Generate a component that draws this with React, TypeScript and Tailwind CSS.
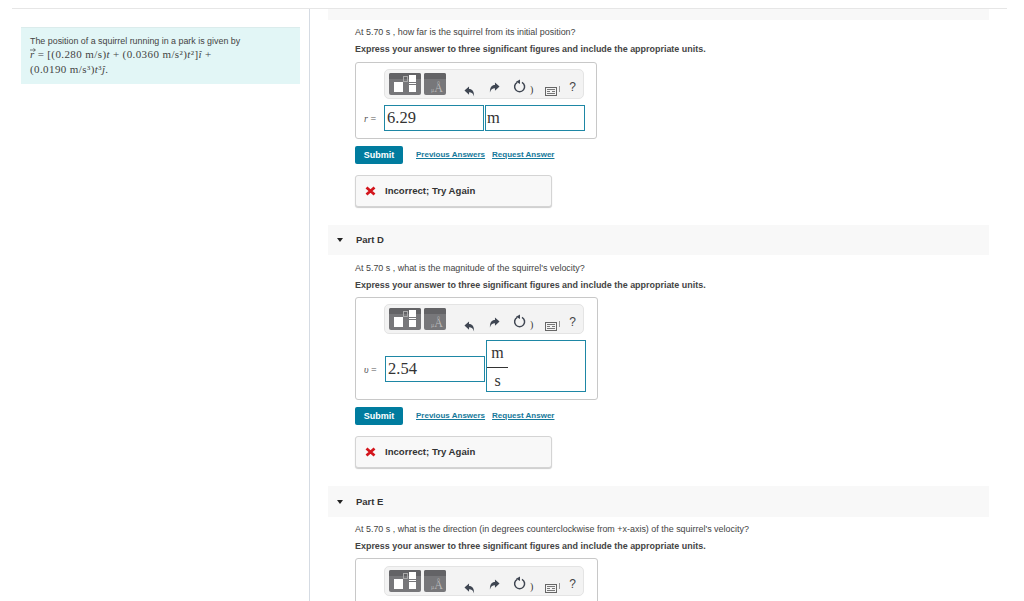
import { ReactNode } from "react";

const serif = "font-['Liberation_Serif',serif]";

function Toolbar() {
  return (
    <div className="ml-[28px] flex h-[30px] w-[200px] items-center rounded-[5px] border border-[#e4e4e4] bg-[#f3f3f3] pl-[4px]">
      <div className="relative h-[22px] w-[32px] overflow-hidden rounded-[2px] bg-[#77777a]">
        <div className="h-[6px] bg-[#636366]" />
        <span className="absolute left-[5px] top-[9px] h-[10px] w-[9px] bg-white" />
        <span className="absolute left-[14px] top-[3px] h-[6px] w-[5px] border border-[#aaaaaa]" />
        <span className="absolute left-[20px] top-[2px] h-[7px] w-[7px] bg-white" />
        <span className="absolute left-[20px] top-[10px] h-px w-[7px] bg-white" />
        <span className="absolute left-[20px] top-[12px] h-[7px] w-[7px] bg-white" />
      </div>
      <div className="relative ml-[3px] h-[22px] w-[22px] overflow-hidden rounded-[2px] bg-[#77777a]">
        <div className="h-[6px] bg-[#636366]" />
        <span className={`absolute bottom-[1px] right-[3px] text-[12px] leading-none text-[#b9b9b9] ${serif}`}>
          <span className="text-[6px]">μ</span>Å
        </span>
      </div>
      <svg className="ml-[18px] mt-[14px]" width="11" height="11" viewBox="0 0 12 12">
        <path d="M0.5 5 L5.5 0.5 V3.2 C9 3.2 11 5.5 11 11.5 C10 8 8.5 6.8 5.5 6.8 V9.5 Z" fill="#3f4652" />
      </svg>
      <svg className="ml-[14px] mt-[6px]" width="11" height="11" viewBox="0 0 12 12">
        <path d="M11.5 5 L6.5 0.5 V3.2 C3 3.2 1 5.5 1 11.5 C2 8 3.5 6.8 6.5 6.8 V9.5 Z" fill="#3f4652" />
      </svg>
      <svg className="ml-[13px] mt-[4px]" width="13" height="14" viewBox="0 0 13 14">
        <path d="M4.2 3.3 A5 5 0 1 0 9 3.3" fill="none" stroke="#3f4652" strokeWidth="1.5" />
        <path d="M7 0.5 V5 L3 2.8 Z" fill="#3f4652" />
      </svg>
      <span className={`ml-[4px] mt-[12px] text-[10px] leading-none text-[#333] ${serif}`}>)</span>
      <svg className="ml-[12px] mt-[15px]" width="12" height="9" viewBox="0 0 12 9">
        <rect x="0.5" y="0.5" width="11" height="8" fill="#f3f3f3" stroke="#666" />
        <path d="M2 2.5 H10 M2 4.5 H5 M7 4.5 H10 M2 6.5 H10" stroke="#777" />
      </svg>
      <span className="ml-[2px] mt-[9px] h-[6px] w-px bg-[#999]" />
      <span className="ml-[9px] mt-[6px] font-['Liberation_Sans',sans-serif] text-[12px] leading-none text-[#444]">?</span>
    </div>
  );
}

function Feedback() {
  return (
    <div className="mt-[11px] flex h-[32px] w-[197px] items-center rounded-[3px] border border-[#d4d4d4] bg-[#f8f8f8] pl-[9px] shadow-[0_1px_1px_rgba(0,0,0,0.2)]">
      <svg width="11" height="10" viewBox="0 0 11 10">
        <path d="M1.5 1.5 L9.5 8.5 M9.5 1.5 L1.5 8.5" stroke="#d3151c" strokeWidth="2.8" />
      </svg>
      <span className="ml-[9px] text-[9.6px] font-bold text-[#333]">Incorrect; Try Again</span>
    </div>
  );
}

function Actions({ className }: { className: string }) {
  return (
    <div className={`flex items-center ${className}`}>
      <button className="h-[18px] w-[48px] rounded-[2px] bg-[#007c9f] pt-[1px] text-[9px] font-bold text-white">Submit</button>
      <a className="ml-[13px] text-[8px] font-bold text-[#16799b] underline">Previous Answers</a>
      <a className="ml-[7px] text-[8px] font-bold text-[#16799b] underline">Request Answer</a>
    </div>
  );
}

function Part({ label, className }: { label: string; className: string }) {
  return (
    <div className={`flex items-center bg-[#f8f8f8] ${className}`}>
      <span className="ml-[9px] h-0 w-0 border-x-[3.5px] border-t-[4px] border-x-transparent border-t-[#222]" />
      <span className="ml-[13px] pt-[1px] text-[9.5px] font-bold text-[#333]">{label}</span>
    </div>
  );
}

function Question({ text }: { text: string }) {
  return (
    <div className="ml-[27px]">
      <p className="text-[8.95px] leading-[12px] text-[#444]">{text}</p>
      <p className="mt-[5px] text-[8.95px] font-bold leading-[12px] text-[#444]">
        Express your answer to three significant figures and include the appropriate units.
      </p>
    </div>
  );
}

function Field({ className, children }: { className: string; children: ReactNode }) {
  return (
    <div className={`flex items-center border border-[#1e87a5] bg-white text-[#333] ${serif} ${className}`}>
      {children}
    </div>
  );
}

export default function App() {
  return (
    <div className="h-[601px] w-[1024px] overflow-hidden bg-white pt-[8px] font-['Liberation_Sans',sans-serif]">
      <div className="mx-[12px] flex h-[593px] w-[995px] border-t border-[#e6e6e6]">
        <aside className="w-[298px] shrink-0 border-r border-[#d5dbe3] pr-[9px] pl-[9px] pt-[18px]">
          <div className={`h-[57px] border-t border-[#dbecec] bg-[#e2f6f6] pl-[9px] pt-[7px] text-[#444] ${serif}`}>
            <p className="font-['Liberation_Sans',sans-serif] text-[8.9px] leading-[12px]">
              The position of a squirrel running in a park is given by
            </p>
            <p className="mt-[1px] whitespace-nowrap text-[11px] leading-[13px] tracking-[0.4px]">
              <span className="relative">
                <i>r</i>
                <svg className="absolute left-0 top-0" width="6" height="4" viewBox="0 0 6 4">
                  <path d="M0 2 H5 M3.5 0.5 L5.5 2 L3.5 3.5" fill="none" stroke="#444" strokeWidth="0.7" />
                </svg>
              </span>
              <span className="mx-[3px]">=</span>[(0.280 m/s)<i>t</i>
              <span className="mx-[3px]">+</span>(0.0360 m/s²)<i>t</i>²]<i>î</i>
              <span className="ml-[3px]">+</span>
            </p>
            <p className="mt-[2px] text-[11px] leading-[13px] tracking-[0.4px]">
              (0.0190 m/s³)<i>t</i>³<i>ĵ</i>.
            </p>
          </div>
        </aside>

        <main className="ml-[18px] w-[661px]">
          <div className="h-[11px] bg-[#f8f8f8]" />
          <div className="pt-[6px]">
            <Question text="At 5.70 s , how far is the squirrel from its initial position?" />
          </div>
          <div className="ml-[27px] mt-[7px]">
            <div className="h-[77px] w-[242px] rounded-[3px] border border-[#c8c8c8] pt-[6px]">
              <Toolbar />
              <div className="mt-[6px] flex items-center pl-[8px]">
                <span className={`w-[20px] text-[10px] text-[#555] ${serif}`}>
                  <i>r</i> =
                </span>
                <Field className="h-[26px] w-[100px] pl-[2px] text-[16.5px]">6.29</Field>
                <Field className="ml-[1px] h-[26px] w-[100px] pl-[1px] text-[16.5px]">m</Field>
              </div>
            </div>
            <Actions className="mt-[7px]" />
            <Feedback />
          </div>

          <div className="mt-[18px]">
            <Part label="Part D" className="h-[30px]" />
          </div>
          <div className="pt-[7px]">
            <Question text="At 5.70 s , what is the magnitude of the squirrel's velocity?" />
          </div>
          <div className="ml-[27px] mt-[6px]">
            <div className="h-[103px] w-[243px] rounded-[3px] border border-[#c8c8c8] pt-[6px]">
              <Toolbar />
              <div className="mt-[6px] flex items-center pl-[8px]">
                <span className={`mt-[6px] w-[21px] text-[10px] text-[#555] ${serif}`}>
                  <i>υ</i> =
                </span>
                <Field className="mt-[6px] h-[26px] w-[100px] pl-[2px] text-[16.5px]">2.54</Field>
                <Field className="ml-[1px] h-[52px] w-[100px] text-[16px]">
                  <div className="mt-[2px] w-[21px] text-center leading-none">
                    <div className="border-b border-[#333] pb-[6px]">m</div>
                    <div className="pt-[5px]">s</div>
                  </div>
                </Field>
              </div>
            </div>
            <Actions className="mt-[7px]" />
            <Feedback />
          </div>

          <div className="mt-[18px]">
            <Part label="Part E" className="h-[31px]" />
          </div>
          <div className="pt-[6px]">
            <Question text="At 5.70 s , what is the direction (in degrees counterclockwise from +x-axis) of the squirrel's velocity?" />
          </div>
          <div className="ml-[27px] mt-[6px]">
            <div className="h-[104px] w-[243px] rounded-[3px] border border-[#c8c8c8] pt-[7px]">
              <Toolbar />
            </div>
          </div>
        </main>
      </div>
    </div>
  );
}
